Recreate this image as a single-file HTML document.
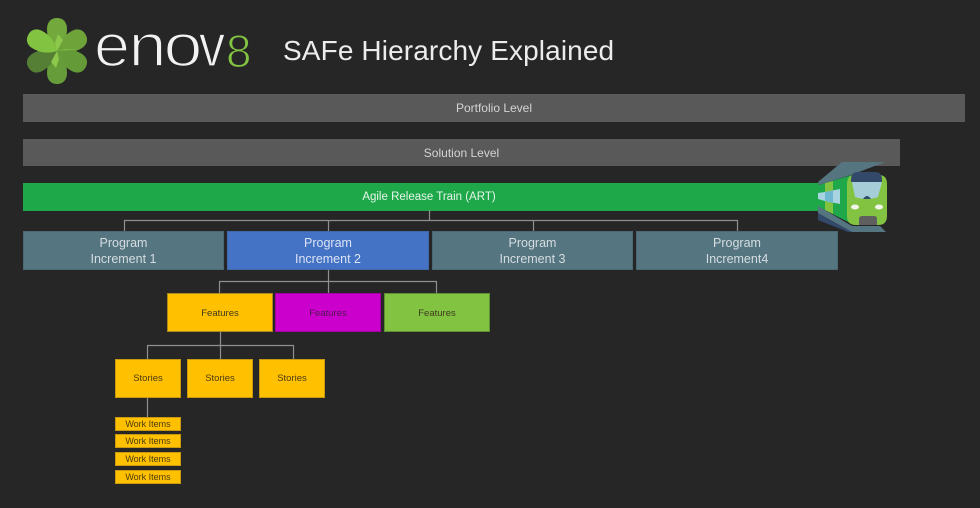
<!DOCTYPE html>
<html><head><meta charset="utf-8">
<style>
html,body{margin:0;padding:0;background:#262626;}
body{width:980px;height:508px;position:relative;overflow:hidden;font-family:"Liberation Sans",sans-serif;}
.b{position:absolute;box-sizing:border-box;display:flex;align-items:center;justify-content:center;text-align:center;}
.bar{color:#d4d4d4;font-size:12px;background-color:#595959;background-image:radial-gradient(#5c5c5c .7px,transparent .9px);background-size:4px 4px;}
.pi{top:231px;height:39px;background:#557580;color:#d5dde0;font-size:12.5px;line-height:15.5px;border:1px solid #4b6873;padding-top:2px;}
.f{top:293px;height:39px;width:106px;font-size:9.5px;color:#3d3a20;padding-top:2px;}
.s{top:359px;height:39px;width:66px;background:#ffc000;border:1px solid #c99a10;font-size:9.5px;color:#4a3c10;}
.w{left:115px;width:66px;height:14px;background:#ffc000;border:1px solid #c99a10;font-size:9px;color:#4a3c10;}
svg{position:absolute;left:0;top:0;}
</style></head>
<body>
<svg width="980" height="508" viewBox="0 0 980 508" style="z-index:1">
  <g stroke="#8f8f8f" stroke-width="1.200" fill="none">
    <path d="M429.500 210V220.500M124.500 231V220.500H737.500V231M328.500 220.500V231M533.500 220.500V231"/>
    <path d="M328.500 270V281.500M219.500 293V281.500H436.500V293M328.500 281.500V293"/>
    <path d="M220.500 332V345.500M147.500 359V345.500H293.500V359M220.500 345.500V359"/>
    <path d="M147.500 398V417"/>
  </g>
</svg>

<svg width="300" height="90" viewBox="0 0 300 90" style="z-index:2">
  <defs>
    <path id="pt" d="M0 0C-7-6-10-14-10-22C-10-29-6-33 0-33C6-33 10-29 10-22C10-14 7-6 0 0Z"/>
  </defs>
  <g transform="translate(57,51)">
    <use href="#pt" fill="#72a83c"/>
    <use href="#pt" fill="#6ea33a" transform="rotate(60)"/>
    <use href="#pt" fill="#649a37" transform="rotate(120)"/>
    <use href="#pt" fill="#679c3a" transform="rotate(180)"/>
    <use href="#pt" fill="#557f34" transform="rotate(240)"/>
    <use href="#pt" fill="#82c341" transform="rotate(300)"/>
    <path d="M0 0L6-11 1-17-2-8Z" fill="#8cc84b"/>
    <path d="M0 0L-6 11-1 17 2 8Z" fill="#8cc84b"/>
    <path d="M0 0L14-1 20-2H8Z" fill="#7fb840"/>
  </g>
  <g font-family="'Liberation Sans',sans-serif" stroke="#262626" paint-order="fill stroke" style="text-rendering:geometricPrecision">
    <text x="94" y="66" font-size="60" fill="#f2f2f2" stroke-width="1.700" textLength="36" lengthAdjust="spacingAndGlyphs">e</text>
    <text x="128.500" y="66" font-size="60" fill="#f2f2f2" stroke-width="1.700" textLength="38" lengthAdjust="spacingAndGlyphs">n</text>
    <text x="163.500" y="66" font-size="60" fill="#f2f2f2" stroke-width="1.700" textLength="39" lengthAdjust="spacingAndGlyphs">o</text>
    <text x="199" y="66" font-size="60" fill="#f2f2f2" stroke-width="1.200" textLength="26" lengthAdjust="spacingAndGlyphs">v</text>
    <text x="226" y="67" font-size="46" fill="#82c341" stroke-width="1.200" textLength="25.500" lengthAdjust="spacingAndGlyphs">8</text>
  </g>
</svg>

<div style="position:absolute;left:283px;top:35px;width:340px;font-size:28px;line-height:32px;color:#ececec;white-space:nowrap;z-index:2;letter-spacing:.12px;">SAFe Hierarchy Explained</div>

<div class="b bar" style="left:23px;top:94px;width:942px;height:28px;">Portfolio Level</div>
<div class="b bar" style="left:23px;top:139px;width:877px;height:27px;">Solution Level</div>
<div class="b" style="left:23px;top:183px;width:796px;height:28px;background:#1fa84a;color:#e6f5ea;font-size:11.500px;padding-left:16px;">Agile Release Train (ART)</div>

<div class="b pi" style="left:23px;width:201px;">Program<br>Increment 1</div>
<div class="b pi" style="left:227px;width:202px;background:#4472c4;border-color:#3f68ad;color:#dbe4f5;">Program<br>Increment 2</div>
<div class="b pi" style="left:432px;width:201px;">Program<br>Increment 3</div>
<div class="b pi" style="left:636px;width:202px;">Program<br>Increment4</div>

<div class="b f" style="left:167px;background:#ffc000;border:1px solid #a88a1a;">Features</div>
<div class="b f" style="left:275px;background:#cc00cc;border:1px solid #a000a0;color:#4f1a50;">Features</div>
<div class="b f" style="left:384px;background:#82c341;border:1px solid #5f8f33;">Features</div>

<div class="b s" style="left:115px;">Stories</div>
<div class="b s" style="left:187px;">Stories</div>
<div class="b s" style="left:259px;">Stories</div>

<div class="b w" style="top:417px;">Work Items</div>
<div class="b w" style="top:434px;">Work Items</div>
<div class="b w" style="top:452px;">Work Items</div>
<div class="b w" style="top:470px;">Work Items</div>

<svg width="980" height="508" viewBox="0 0 980 508" style="z-index:3">
  <path d="M819 185L852 175V224L819 207Z" fill="#1fa84a"/>
  <path d="M825 183L833 181V214L825 210Z" fill="#82c341"/>
  <path d="M818 182L842 162H885L851 175 819 185Z" fill="#557580"/>
  <path d="M818 213L852 232H848L818 220Z" fill="#33496a"/>
  <path d="M818 206L852 226H880L886 232H852L818 213Z" fill="#557580"/>
  <path d="M818 193L825 192 840 189V204L825 201 818 199Z" fill="#a7d4e0"/>
  <path d="M825 192L833 190.500V203L825 201Z" fill="#6fb9d0"/>
  <path d="M847 184Q847 175 855 175H879Q887 175 887 184V216Q887 225 878 225H856Q847 225 847 216Z" fill="#82c341"/>
  <path d="M851 180Q851 172 858 172H875Q882 172 882 180V182H851Z" fill="#33496a"/>
  <path d="M852 182H882L878 197Q867 201 855 197Z" fill="#a5cdd8"/>
  <path d="M863 199Q867 193 871 199Z" fill="#33496a"/>
  <ellipse cx="855" cy="207" rx="4" ry="2.500" fill="#f1f5ea"/>
  <ellipse cx="879" cy="207" rx="4" ry="2.500" fill="#f1f5ea"/>
  <path d="M859 219Q859 216 862 216H874Q877 216 877 219V225H859Z" fill="#5f5f5f"/>
</svg>
</body></html>
